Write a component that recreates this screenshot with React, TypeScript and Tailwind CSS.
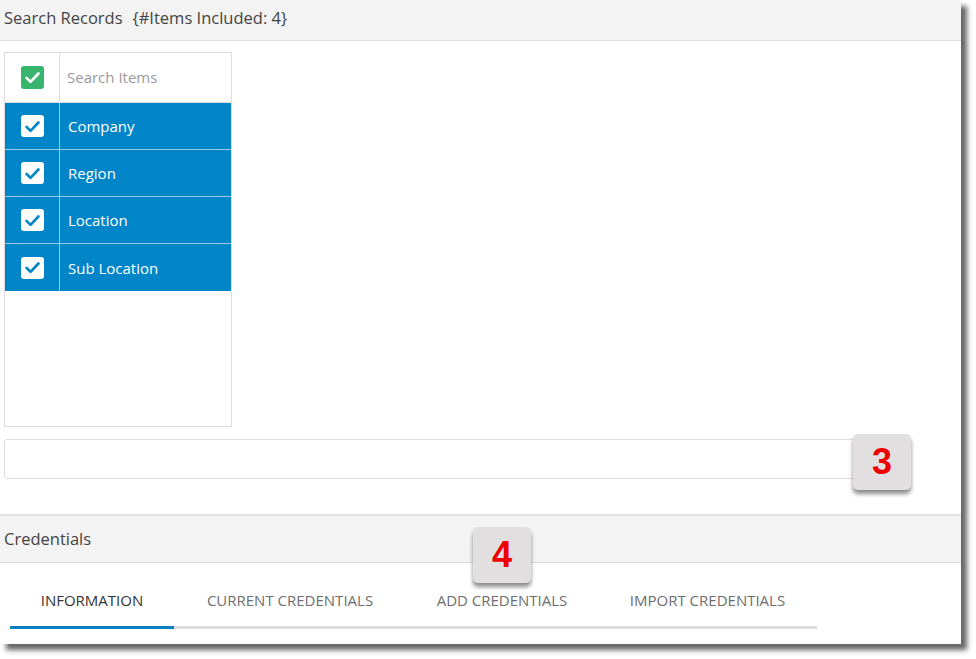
import React from "react"

const items = ["Company", "Region", "Location", "Sub Location"]
const tabs = [
  { label: "INFORMATION", w: "w-[164px]", active: true },
  { label: "CURRENT CREDENTIALS", w: "w-[232px]" },
  { label: "ADD CREDENTIALS", w: "w-[192px]" },
  { label: "IMPORT CREDENTIALS", w: "w-[219px]" },
]

function Check({ color }: { color: string }) {
  return (
    <svg viewBox="0 0 24 24" className="w-[19px] h-[19px]">
      <polyline points="4.5,12.5 9.5,17.5 19.5,7" fill="none" stroke={color} strokeWidth="3.4" strokeLinecap="round" strokeLinejoin="round" />
    </svg>
  )
}

function Badge({ n, className }: { n: string; className: string }) {
  return (
    <div
      className={
        "absolute w-[58px] h-[56px] rounded-[5px] bg-[#e1dfe0] shadow-[0_4px_4px_rgba(0,0,0,0.45)] flex items-center justify-center text-[36px] font-bold text-[#ee0000] " +
        className
      }
      style={{ fontFamily: '"Liberation Sans", Arial, sans-serif' }}
    >
      {n}
    </div>
  )
}

export default function App() {
  return (
    <div className="w-full h-[659px] bg-white" style={{ fontFamily: '"Open Sans", sans-serif' }}>
      <div className="relative w-[961px] h-[644px] bg-white flex flex-col shadow-[6px_6px_5px_rgba(0,0,0,0.6)]">
        {/* Search records panel */}
        <div className="h-[41px] bg-[#f3f3f3] border-b border-[#dddddd] px-1 pb-[3px] flex items-center text-[16.5px] text-[#444]">
          <span>Search Records</span>
          <span className="ml-[10px]">{"{#Items Included: 4}"}</span>
        </div>

        <div className="px-1 pt-[11px]">
          <div className="w-[228px] h-[375px] border border-[#dddddd] flex flex-col">
            <div className="h-[50px] flex border-b border-[#dddddd]">
              <div className="w-[55px] border-r border-[#dddddd] flex items-center justify-center">
                <div className="w-[23px] h-[23px] rounded-[3px] bg-[#38b56c] flex items-center justify-center">
                  <Check color="#ffffff" />
                </div>
              </div>
              <div className="flex-1 flex items-center px-[7px] text-[15px] text-[#9a9a9a]">Search Items</div>
            </div>
            {items.map((it) => (
              <div key={it} className="h-[47px] flex bg-[#0085c8] border-b border-[#9ccbe8] last:border-b-0">
                <div className="w-[55px] border-r border-[#9ccbe8] flex items-center justify-center">
                  <div className="w-[23px] h-[22px] rounded-[3px] bg-white flex items-center justify-center">
                    <Check color="#0085c8" />
                  </div>
                </div>
                <div className="flex-1 flex items-center px-[8px] pt-[1px] text-[15px] text-white">{it}</div>
              </div>
            ))}
          </div>

          <div className="relative mt-[12px]">
            <div className="w-[870px] h-[40px] border border-[#dddddd] rounded-[3px] bg-white" />
            <Badge n="3" className="left-[849px] -top-[5px]" />
          </div>
        </div>

        {/* Credentials panel */}
        <div className="mt-[35px] border-t-2 border-[#e3e3e3] h-[49px] bg-[#f3f3f3] border-b border-b-[#dddddd] px-1 flex items-center text-[16.5px] text-[#444]">
          Credentials
        </div>
        <div className="pl-[10px]">
          <div className="flex w-[807px] border-b-[3px] border-[#dddddd]">
            {tabs.map((t) => (
              <div
                key={t.label}
                className={
                  t.w +
                  " h-[66px] pt-[26px] -mb-[3px] flex justify-center text-[15px] " +
                  (t.active ? "border-b-[3px] border-[#0a7fc2] text-[#333]" : "text-[#6e6e6e]")
                }
              >
                {t.label}
              </div>
            ))}
          </div>
        </div>
        <Badge n="4" className="left-[473px] top-[527px]" />
      </div>
    </div>
  )
}
